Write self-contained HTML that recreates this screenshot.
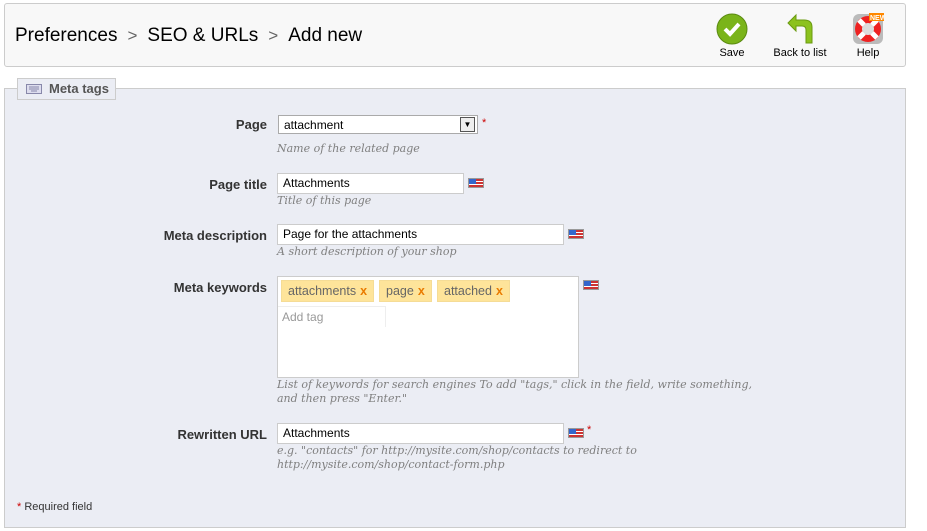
<!DOCTYPE html><html><head><style>
body{margin:0;width:927px;height:531px;background:#fff;font-family:"Liberation Sans",sans-serif;position:relative;overflow:hidden}
.a{position:absolute}
.hdr{left:4px;top:3px;width:900px;height:62px;background:#f8f8f8;border:1px solid #ccc;border-radius:3px}
.bc{left:15px;top:25px;font-size:19px;color:#000}
.bc span{color:#666;margin:0 10px;font-size:17px}
.tb{font-size:11px;color:#000;text-align:center}
.fs{left:4px;top:88px;width:900px;height:438px;background:#ebedf4;border:1px solid #ccc}
.lg{left:17px;top:78px;width:97px;height:20px;background:#ebedf4;border:1px solid #ccc;font-weight:bold;font-size:13px;color:#555;line-height:20px}
.lb{right:660px;font-weight:bold;font-size:13px;color:#333}
.in{background:#fff;border:1px solid #ccc;font-size:12px;line-height:18px;padding-left:5px;box-sizing:border-box;color:#000}
.h{left:277px;font-family:"DejaVu Serif",serif;font-style:italic;font-size:11px;color:#7f7f7f;line-height:14px}
.fl{width:16px;height:10px;background:repeating-linear-gradient(#c33 0 2px,#fff 2px 3px);border:1px solid #999;box-sizing:border-box}
.fl:before{content:"";position:absolute;left:0;top:0;width:7px;height:5px;background:#36c}
.req{color:#c00;font-size:11px}
.tag{background:#fee49a;border:1px solid #f5dc96;color:#666;font-size:12.5px;height:20px;line-height:20px;padding:0 6px}
.tag b{color:#e97b00;font-weight:bold;margin-left:4px}
</style></head><body>
<div class="a hdr"></div>
<div class="a bc">Preferences<span>&gt;</span>SEO &amp; URLs<span>&gt;</span>Add new</div>
<svg class="a" style="left:716px;top:13px" width="32" height="32"><circle cx="16" cy="16" r="15" fill="#7ab41a" stroke="#5a8a10"/><path d="M9 16l5 5 9-10" stroke="#fff" stroke-width="4" fill="none"/></svg>
<div class="a tb" style="left:712px;top:47px;width:40px">Save</div>
<svg class="a" style="left:786px;top:13px" width="30" height="32"><path d="M10 2L2 10l8 8v-5h6q4 0 4 4v13h6V14q0-7-8-7h-8z" fill="#8cc21e" stroke="#6a9a10"/></svg>
<div class="a tb" style="left:770px;top:47px;width:60px">Back to list</div>
<svg class="a" style="left:852px;top:13px" width="32" height="32"><rect x="1" y="1" width="30" height="30" rx="6" fill="#bbb"/><circle cx="16" cy="16" r="13" fill="#e22"/><circle cx="16" cy="16" r="6" fill="#ddd"/><path d="M7 7l5 5M25 7l-5 5M7 25l5-5M25 25l-5-5" stroke="#fff" stroke-width="5"/><rect x="17" y="0" width="15" height="8" fill="#f80"/><text x="18" y="7" font-size="7" fill="#fff" font-weight="bold" font-family="Liberation Sans">NEW</text></svg>
<div class="a tb" style="left:848px;top:47px;width:40px">Help</div>
<div class="a fs"></div>
<div class="a lg"><svg style="position:absolute;left:8px;top:5px" width="16" height="10"><rect x=".5" y=".5" width="15" height="9" fill="#dde" stroke="#88a"/><path d="M3 3h10M3 5h10M5 7h6" stroke="#88a"/></svg><span style="position:absolute;left:31px">Meta tags</span></div>
<div class="a lb" style="top:117px">Page</div>
<div class="a in" style="left:278px;top:115px;width:200px;height:19px;border-color:#aaa">attachment</div>
<div class="a" style="left:460px;top:117px;width:15px;height:15px;border:1px solid #555;background:#eee;box-sizing:border-box;font-size:8px;text-align:center;line-height:13px">▼</div>
<div class="a req" style="left:482px;top:117px">*</div>
<div class="a h" style="top:142px">Name of the related page</div>
<div class="a lb" style="top:177px">Page title</div>
<div class="a in" style="left:277px;top:173px;width:187px;height:21px">Attachments</div>
<div class="a fl" style="left:468px;top:178px"></div>
<div class="a h" style="top:194px">Title of this page</div>
<div class="a lb" style="top:228px">Meta description</div>
<div class="a in" style="left:277px;top:224px;width:287px;height:21px">Page for the attachments</div>
<div class="a fl" style="left:568px;top:229px"></div>
<div class="a h" style="top:245px">A short description of your shop</div>
<div class="a lb" style="top:280px">Meta keywords</div>
<div class="a in" style="left:277px;top:276px;width:302px;height:102px"></div>
<div class="a tag" style="left:281px;top:280px">attachments<b>x</b></div>
<div class="a tag" style="left:379px;top:280px">page<b>x</b></div>
<div class="a tag" style="left:437px;top:280px">attached<b>x</b></div>
<div class="a" style="left:278px;top:306px;width:103px;height:20px;border-right:1px solid #eee;border-top:1px solid #eee;font-size:12px;color:#999;line-height:20px;padding-left:4px">Add tag</div>
<div class="a fl" style="left:583px;top:280px"></div>
<div class="a h" style="top:378px;width:495px">List of keywords for search engines To add "tags," click in the field, write something, and then press "Enter."</div>
<div class="a lb" style="top:427px">Rewritten URL</div>
<div class="a in" style="left:277px;top:423px;width:287px;height:21px">Attachments</div>
<div class="a fl" style="left:568px;top:428px"></div>
<div class="a req" style="left:587px;top:424px">*</div>
<div class="a h" style="top:444px;width:400px">e.g. "contacts" for http://mysite.com/shop/contacts to redirect to http://mysite.com/shop/contact-form.php</div>
<div class="a" style="left:17px;top:501px;font-size:11px;color:#333"><span class="req">*</span> Required field</div>
</body></html>
